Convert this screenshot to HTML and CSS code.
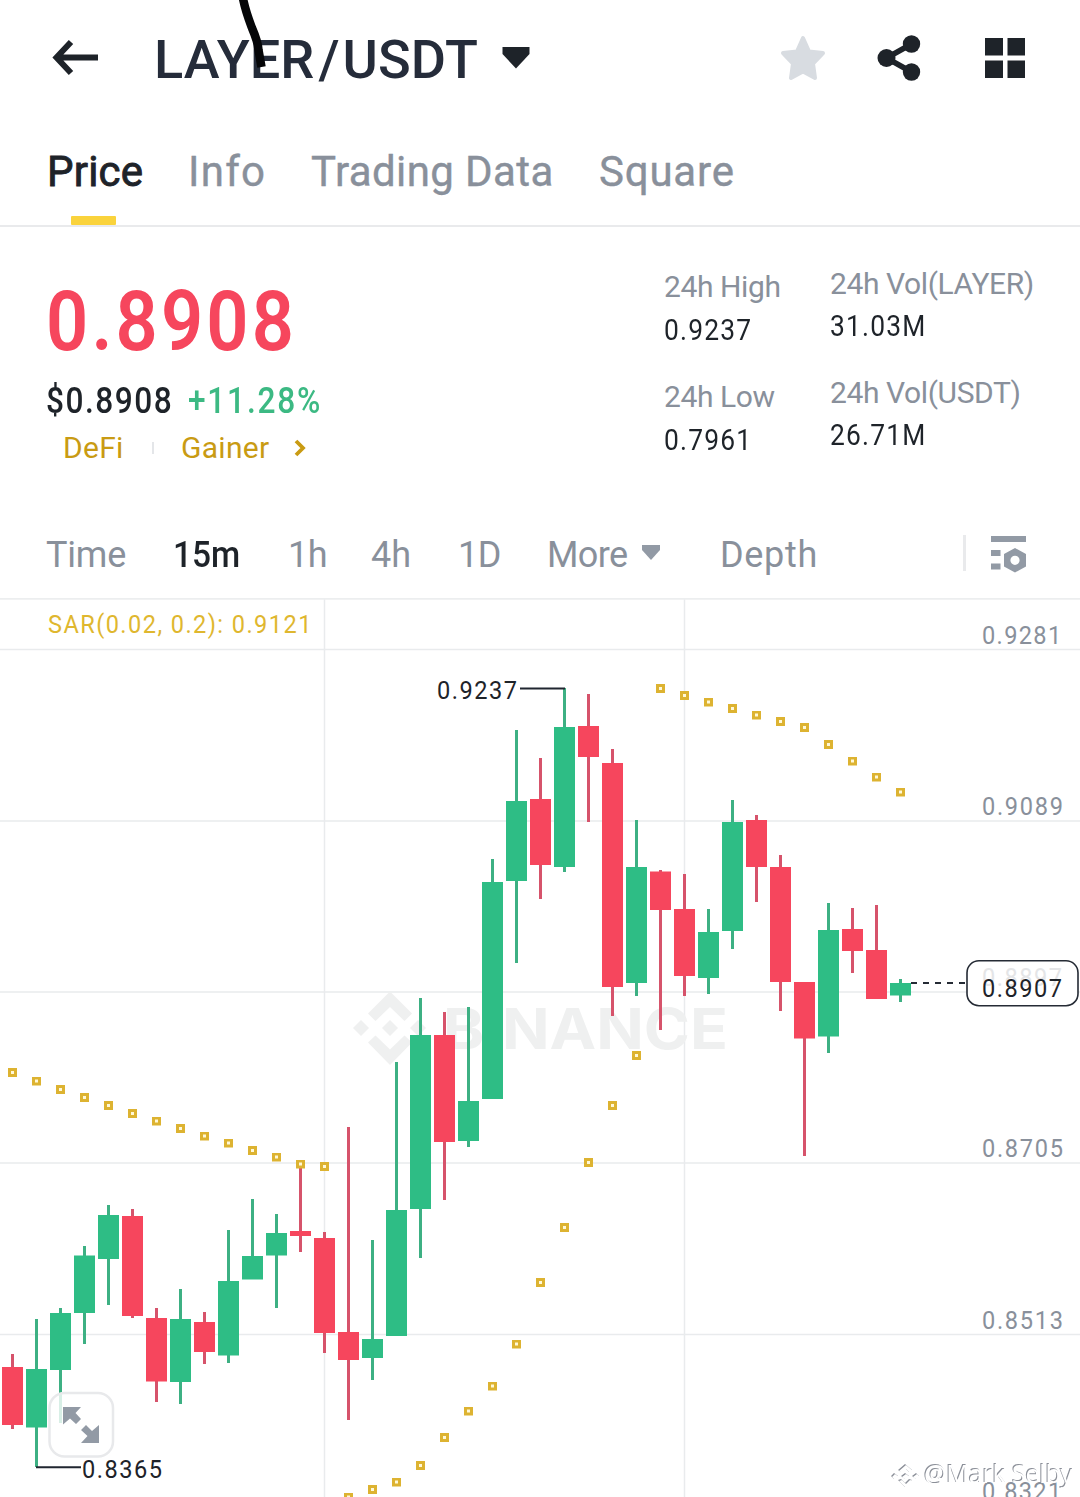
FILE: index.html
```html
<!DOCTYPE html>
<html lang="en">
<head>
<meta charset="utf-8">
<title>LAYER/USDT</title>
<link rel="stylesheet" href="styles.css">
</head>
<body>
<main class="app">
  <header class="topbar">
    <svg class="back" width="46" height="38" viewBox="0 0 46 38"><path d="M19 3 4.500 18.500 19 34M5 18.500H46" fill="none" stroke="#1e2329" stroke-width="6"/></svg>
    <h1 class="pair">LAYER<span class="slash">/</span>USDT</h1>
    <svg class="caret" width="28" height="22" viewBox="0 0 28 22"><path d="M0.500 0h27v7L14 21.500 0.500 7z" fill="#1e2329"/></svg>
    <div class="actions">
      <svg width="46" height="46" viewBox="0 0 46 46"><path d="M23 3 29 16.500 43 18 33 28.500 35 43 23 36.500 11 43 13 28.500 3 18 17 16.500z" fill="#d8dce1" stroke="#d8dce1" stroke-width="4" stroke-linejoin="round"/></svg>
      <svg width="44" height="46" viewBox="0 0 44 46"><path d="M34.500 9 9.500 23 34.500 37" fill="none" stroke="#1e2329" stroke-width="5.500"/><g fill="#1e2329"><circle cx="34.500" cy="9" r="8.700"/><circle cx="9.500" cy="23" r="9"/><circle cx="34.500" cy="37" r="8.700"/></g></svg>
      <svg width="40" height="40" viewBox="0 0 40 40"><path d="M0 0h18v17.500H0zM22.500 0H40v17.500H22.500zM0 22.500h18V40H0zM22.500 22.500H40V40H22.500z" fill="#1e2329"/></svg>
    </div>
    <svg class="stroke" width="36" height="70" viewBox="0 0 36 70"><path d="M6.500-4C9 10 13 20 16 28Q22 42 22.500 50L25.500 67" fill="none" stroke="#050608" stroke-width="8.500"/></svg>
  </header>
  <nav class="tabs">
    <a class="tab active">Price</a>
    <a class="tab info">Info</a>
    <a class="tab trading">Trading Data</a>
    <a class="tab square">Square</a>
  </nav>
  <section class="summary">
    <div class="quote">
      <div class="last">0.8908</div>
      <div class="change"><span class="fiat">$0.8908</span><span class="up">+11.28%</span></div>
      <div class="tags"><span class="tag">DeFi</span><i></i><span class="tag gainer">Gainer</span>
        <svg width="12" height="18" viewBox="0 0 12 18"><path d="m2 2 7 7-7 7" fill="none" stroke="#c99b13" stroke-width="3.800"/></svg></div>
    </div>
    <dl class="stats">
      <div><dt>24h High</dt><dd>0.9237</dd></div>
      <div><dt>24h Low</dt><dd>0.7961</dd></div>
    </dl>
    <dl class="stats volume">
      <div><dt>24h Vol(LAYER)</dt><dd>31.03M</dd></div>
      <div><dt>24h Vol(USDT)</dt><dd>26.71M</dd></div>
    </dl>
  </section>
  <nav class="intervals">
    <span class="time">Time</span>
    <span class="m15">15m</span>
    <span class="h1">1h</span>
    <span class="h4">4h</span>
    <span class="d1">1D</span>
    <span class="more">More</span>
    <svg class="small-caret" width="18" height="15" viewBox="0 0 18 15"><path d="M0 0h18v5L9 15 0 5z" fill="#929aa5"/></svg>
    <span class="depth">Depth</span>
    <i class="divider"></i>
    <svg class="settings" width="36" height="38" viewBox="0 0 36 38"><path d="M1 1h35v6H1zM1 15h9.500v6H1zM1 28.500h9.500v6H1z" fill="#929aa5"/><path fill-rule="evenodd" d="m25 13 11 6v12.500L25 37.500l-11-6V19zM25 20.700a4.600 4.600 0 1 0 0 9.200 4.600 4.600 0 0 0 0-9.200z" fill="#929aa5"/></svg>
  </nav>
  <svg class="chart" width="1080" height="899" viewBox="0 598 1080 899">
    <defs>
      <marker id="sar" markerUnits="userSpaceOnUse" markerWidth="9" markerHeight="9" refX="4.500" refY="4.500"><path d="M0 0h9v9H0z" fill="#ddb331"/><path d="M3 3h3v3H3z" fill="#fff8d8"/></marker>
    </defs>
    <g class="grid">
      <path d="M0 649.500H1080M0 821H1080M0 992H1080M0 1163H1080M0 1334.500H1080M324.500 599V1497M684.500 599V1497"/>
      <path class="top" d="M0 598.800H1080"/>
    </g>
    <g class="brand">
      <path d="m390 991.500 22 22-7.500 7.500-14.500-14-14.500 14-7.500-7.500zM361 1020l8 8-8 8-8-8zM390 1020l8 8-8 8-8-8zM418 1020l8 8-8 8-8-8zM375.500 1035.500l14.500 14 14.500-14 7.500 7-22 22.500-22-22.500z"/>
      <text x="443" y="1049" textLength="285" lengthAdjust="spacingAndGlyphs">BINANCE</text>
    </g>
    <text class="num indicator" x="48" y="633" textLength="296">SAR(0.02, 0.2): 0.9121</text>
    <g class="axis">
      <text class="num" x="982" y="644" textLength="89">0.9281</text>
      <text class="num" x="982" y="815" textLength="91">0.9089</text>
      <text class="num" x="982" y="1157" textLength="91">0.8705</text>
      <text class="num" x="982" y="1329" textLength="91">0.8513</text>
      <text class="num" x="982" y="1500" textLength="89">0.8321</text>
    </g>
    <path class="wick green" d="M36.500 1319V1467M60.500 1308V1423M84.500 1246V1344M108.500 1205V1305M180.500 1289V1404M228.500 1230V1363M252.500 1199V1279M276.500 1214V1308M372.500 1240V1380M396.500 1062V1336M420.500 998V1258M468.500 1007V1147M492.500 859V1099M516.500 730V963M564.500 688V872M636.500 820V996M708.500 909V994M732.500 800V949M828.500 903V1053M900.500 979V1002"/>
    <path class="wick red" d="M12.500 1354V1429M132.500 1209V1318M156.500 1308V1402M204.500 1312V1364M300.500 1165V1252M324.500 1232V1353M348.500 1127V1420M444.500 1012V1200M540.500 758V899M588.500 694V822M612.500 749V1016M660.500 870V1030M684.500 874V996M756.500 815V902M780.500 855V1011M804.500 982V1156M852.500 908V973M876.500 905V999"/>
    <path class="body green" d="M36.500 1369V1427.500M60.500 1313V1370M84.500 1255.500V1313M108.500 1215V1259M180.500 1319V1382M228.500 1281V1355.500M252.500 1256V1279.500M276.500 1233V1255.500M372.500 1339V1358M396.500 1210V1336M420.500 1035V1209M468.500 1101V1141M492.500 882V1099M516.500 801V881M564.500 727V867M636.500 867V983M708.500 932V978M732.500 822V931M828.500 930V1036.500M900.500 983V995.500"/>
    <path class="body red" d="M12.500 1367V1425M132.500 1216V1316M156.500 1318V1381.500M204.500 1322V1352M300.500 1231V1236M324.500 1238V1333M348.500 1332V1360M444.500 1035V1142M540.500 799V865M588.500 726V757M612.500 763V987M660.500 871.500V910M684.500 909V976M756.500 820V867M780.500 867V982M804.500 982V1038.500M852.500 929V951M876.500 950V999"/>
    <g class="sar">
      <polyline points="12.500,1072.500 36.500,1081 60.500,1089.500 84.500,1097.500 108.500,1105.500 132.500,1113.500 156.500,1121 180.500,1128.500 204.500,1136 228.500,1143 252.500,1150.500 276.500,1157 300.500,1164 324.500,1166.500"/>
      <polyline points="348.500,1497 372.500,1489.500 396.500,1482 420.500,1465.500 444.500,1437.500 468.500,1411 492.500,1386 516.500,1344 540.500,1282.500 564.500,1227.500 588.500,1162.500 612.500,1105.500 636.500,1055.500"/>
      <polyline points="660.500,688.500 684.500,695.500 708.500,702 732.500,708.500 756.500,715 780.500,721.500 804.500,727.500 828.500,744.500 852.500,761 876.500,777 900.500,792"/>
    </g>
    <g class="extreme">
      <path d="M520 688.500H565M36 1467.300H81"/>
      <text class="num" x="437" y="699" textLength="90">0.9237</text>
      <text class="num" x="82" y="1478" textLength="90">0.8365</text>
    </g>
    <g class="price-tag">
      <path d="M911 983H966" stroke-dasharray="6 6"/>
      <rect x="967" y="960.700" width="111" height="45" rx="12"/>
      <text class="num ghost" x="982" y="986" textLength="90">0.8897</text>
      <text class="num" x="982" y="997" textLength="90">0.8907</text>
    </g>
    <g class="expand">
      <rect x="49.500" y="1393" width="63.500" height="63.500" rx="15"/>
      <path d="M63 1407H81L75.500 1413 81 1419 76 1424 70 1418.500 63 1424.500zM86 1425 92 1431 99 1425V1443H81L87.500 1436 81 1430z"/>
    </g>
    <g class="signature">
      <path d="m899 1471 7-6 7 6-3 2-4-4-4 4zM892 1477l3-3 4 3-4 3zM902 1477l4-3 4 3-4 3zM913 1477l4-3 3 3-3 3zM899 1481l3-1 4 4 4-4 3 1-7 7z"/>
      <text x="924" y="1483" textLength="149">@Mark Selby</text>
    </g>
  </svg>
</main>
</body>
</html>
```
FILE: styles.css
```css
* { box-sizing: border-box; }
body { margin: 0; background: #fff; color: #1e2329; font-family: Roboto, "Liberation Sans", sans-serif; }
.app { width: 1080px; height: 1497px; overflow: hidden; display: flex; flex-direction: column; }
svg { flex: none; }
span, a, dt, dd, .last { white-space: nowrap; }

.topbar { position: relative; height: 115px; flex: none; display: flex; align-items: center; padding: 0 55px 0 52px; }
.back { margin-right: 56px; }
.pair { margin: 3px 0 0; width: 348px; font-size: 54px; font-weight: 500; letter-spacing: 0.1px; color: #252c3a; }
.slash { padding: 0 3px 0 4px; }
.actions { display: flex; align-items: center; margin-left: auto; }
.actions svg:nth-child(2) { margin: 0 64px 0 51px; }
.stroke { position: absolute; left: 236px; top: 0; }

.tabs { height: 112px; flex: none; display: flex; border-bottom: 2px solid #e9eaec; padding-left: 47px; font-size: 42px; line-height: 113px; color: #89909b; }
.tab { font-weight: 400; letter-spacing: 0.4px; -webkit-text-stroke: 0.4px; }
.tab.active { position: relative; width: 141px; letter-spacing: 0.2px; -webkit-text-stroke: 0.9px; color: #1e2329; }
.tab.active::after { content: ""; position: absolute; left: 24px; bottom: 0; width: 45px; height: 9px; border-radius: 1px; background: #fad33c; }
.tab.info { width: 123px; letter-spacing: 1.3px; }
.trading { width: 288px; }
.tab.square { letter-spacing: 0.8px; }

.summary { height: 282px; flex: none; display: flex; }
.quote { width: 664px; padding: 43px 0 0 46px; }
.last { height: 104px; line-height: 104px; font-size: 84px; font-weight: 600; color: #f6465d; letter-spacing: 3.6px; transform: scaleX(0.88); transform-origin: left; }
.change { display: flex; height: 53px; line-height: 53px; margin-top: 1px; font-size: 36px; font-weight: 500; }
.change span { transform: scaleX(0.88); transform-origin: left; }
.fiat { width: 142px; letter-spacing: 1.7px; }
.up { color: #3cb983; letter-spacing: 2px; }
.tags { display: flex; align-items: center; height: 39px; padding-left: 17px; font-size: 30px; color: #c99b13; }
.tag { width: 89px; letter-spacing: 0.3px; }
.tags i { width: 2px; height: 12px; background: #e4e6e9; margin-right: 27px; }
.tag.gainer { width: 113px; }
.stats { width: 166px; margin: 0; padding-top: 38px; font-size: 30px; }
.volume { width: 240px; padding-top: 35px; }
.stats > div { height: 110px; }
.volume > div { height: 109px; }
.stats dt { height: 43px; line-height: 43px; color: #89909b; letter-spacing: -0.4px; }
.stats dd { margin: 0; height: 43px; line-height: 43px; letter-spacing: 1.35px; transform: scaleX(0.88); transform-origin: left; }
.volume dd { line-height: 42px; }

.intervals { height: 89px; flex: none; display: flex; align-items: center; padding-left: 46px; font-size: 36px; line-height: 90px; color: #89909b; }
.intervals span { position: relative; top: 1px; }
.time { width: 127px; letter-spacing: -0.2px; }
.m15 { width: 115px; color: #1e2329; font-weight: 500; transform: scaleX(0.93); transform-origin: left; }
.h1 { width: 83px; letter-spacing: -0.5px; }
.h4 { width: 87px; }
.d1 { width: 89px; letter-spacing: -0.5px; }
.more { width: 95px; letter-spacing: -0.6px; }
.small-caret { margin: -2px 60px 0 0; }
.depth { width: 243px; letter-spacing: 0.7px; }
.divider { width: 3px; height: 36px; background: #e9eaec; margin: -2px 24px 0 0; }

.chart { display: block; font-size: 26.5px; }
.num { transform-box: fill-box; transform-origin: left; transform: scaleX(0.89); }
.grid path { fill: none; stroke: #e9ebed; stroke-width: 1.5; }
.grid .top { stroke: #eceeef; stroke-width: 2; }
.brand { fill: #eff0f0; }
.brand text { font-family: Inter, sans-serif; font-weight: 700; font-size: 57px; }
.indicator { fill: #dfb72f; }
.axis { fill: #89909b; }
.wick { fill: none; stroke-width: 3; }
.body { fill: none; stroke-width: 21; }
.green { stroke: #2ebd85; }
.red { stroke: #f6465d; }
.wick.green { stroke: #3db083; }
.wick.red { stroke: #d6536b; }
.sar polyline { fill: none; stroke: none; marker-start: url(#sar); marker-mid: url(#sar); marker-end: url(#sar); }
.extreme path { stroke: #202630; stroke-width: 2; }
.extreme text { fill: #1e2329; }
.price-tag path { stroke: #252b35; stroke-width: 1.8; }
.price-tag rect { fill: #fff; stroke: #252b35; stroke-width: 1.6; }
.price-tag text { fill: #1e2329; }
.price-tag .ghost { fill: #e4e5e7; }
.expand rect { fill: rgba(255, 255, 255, 0.8); stroke: #e8e9eb; stroke-width: 2.5; }
.expand path { fill: #929aa5; }
.signature { fill: #fff; filter: drop-shadow(-0.5px -0.5px 0.5px #8b8f98); }
.signature text { font-family: "Noto Sans", sans-serif; font-size: 25px; }
```
